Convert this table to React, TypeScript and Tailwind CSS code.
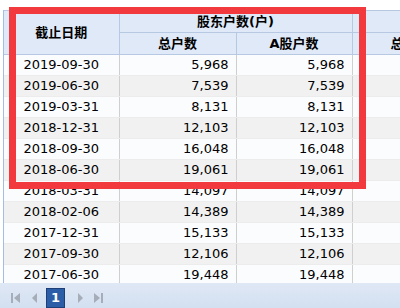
import React from 'react';

const rows = [
  ['2019-09-30', '5,968', '5,968'],
  ['2019-06-30', '7,539', '7,539'],
  ['2019-03-31', '8,131', '8,131'],
  ['2018-12-31', '12,103', '12,103'],
  ['2018-09-30', '16,048', '16,048'],
  ['2018-06-30', '19,061', '19,061'],
  ['2018-03-31', '14,097', '14,097'],
  ['2018-02-06', '14,389', '14,389'],
  ['2017-12-31', '15,133', '15,133'],
  ['2017-09-30', '12,106', '12,106'],
  ['2017-06-30', '19,448', '19,448'],
];

const cjk = { fontFamily: '"DejaVu Sans", "Noto Sans CJK SC", sans-serif' };

const PagerIcon: React.FC<{ kind: 'first' | 'prev' | 'next' | 'last' }> = ({ kind }) => (
  <svg width="10" height="10" viewBox="0 0 10 10" className="text-[#a5adb8]">
    {kind === 'first' && (
      <>
        <rect x="0" y="0" width="2" height="10" fill="currentColor" />
        <path d="M9 0 L3 5 L9 10 Z" fill="currentColor" />
      </>
    )}
    {kind === 'prev' && <path d="M7 0 L2 5 L7 10 Z" fill="currentColor" />}
    {kind === 'next' && <path d="M3 0 L8 5 L3 10 Z" fill="currentColor" />}
    {kind === 'last' && (
      <>
        <path d="M1 0 L7 5 L1 10 Z" fill="currentColor" />
        <rect x="8" y="0" width="2" height="10" fill="currentColor" />
      </>
    )}
  </svg>
);

export default function App() {
  return (
    <div className="relative w-[400px] h-[308px] overflow-hidden bg-white flex flex-col text-black" style={cjk}>
      <div className="h-[10px] shrink-0" />
      <div className="flex-1 overflow-hidden ml-[3px] border-l border-[#a3bde3]">
        <table className="table-fixed border-collapse w-[580px]">
          <colgroup>
            <col className="w-[115px]" />
            <col className="w-[117px]" />
            <col className="w-[116px]" />
            <col className="w-[116px]" />
            <col className="w-[116px]" />
          </colgroup>
          <thead className="bg-[#dfe9f7] text-[13px] font-bold">
            <tr className="h-[22px]">
              <th rowSpan={2} className="border-t border-r border-b border-[#b7c9e2] text-center font-bold">截止日期</th>
              <th colSpan={2} className="border-t border-r border-b border-[#b7c9e2] text-center font-bold">股东户数(户)</th>
              <th colSpan={2} className="border-t border-b border-[#b7c9e2]" />
            </tr>
            <tr className="h-[22px]">
              <th className="border-r border-b border-[#b7c9e2] text-center font-bold">总户数</th>
              <th className="border-r border-b border-[#b7c9e2] text-center font-bold">A股户数</th>
              <th className="border-r border-b border-[#b7c9e2] text-center font-bold">总户数</th>
              <th className="border-b border-[#b7c9e2]" />
            </tr>
          </thead>
          <tbody className="text-[13px]">
            {rows.map((r, i) => (
              <tr key={r[0]} className={`h-[21px] ${i % 2 === 0 ? 'bg-[#fbfcfe]' : 'bg-[#f1f1f1]'}`}>
                <td className="border-r border-b border-r-[#cfcfcf] border-b-[#ececec] text-center leading-[20px]">{r[0]}</td>
                <td className="border-r border-b border-r-[#cfcfcf] border-b-[#ececec] text-right pr-[7px] leading-[20px]">{r[1]}</td>
                <td className="border-r border-b border-r-[#cfcfcf] border-b-[#ececec] text-right pr-[7px] leading-[20px]">{r[2]}</td>
                <td className="border-r border-b border-r-[#cfcfcf] border-b-[#ececec]" />
                <td className="border-b border-b-[#ececec]" />
              </tr>
            ))}
          </tbody>
        </table>
      </div>
      <div className="h-[25px] shrink-0 bg-gradient-to-b from-[#dfe8f5] to-[#d3e0f1] flex items-start pt-[5px] pl-[11px]">
        <div className="flex items-center h-[19px] gap-[10px]">
          <PagerIcon kind="first" />
          <span className="ml-[-1px]"><PagerIcon kind="prev" /></span>
        </div>
        <div className="ml-[6px] w-[19px] h-[20px] bg-[#2c5ea8] border border-[#1d3f78] text-white text-[13px] font-bold flex items-center justify-center">1</div>
        <div className="flex items-center h-[19px] gap-[8px] ml-[10px]">
          <PagerIcon kind="next" />
          <PagerIcon kind="last" />
        </div>
      </div>
      <div className="absolute left-[9px] top-[7px] w-[357px] h-[182px] border-[7px] border-[#f23a3e]" />
    </div>
  );
}
